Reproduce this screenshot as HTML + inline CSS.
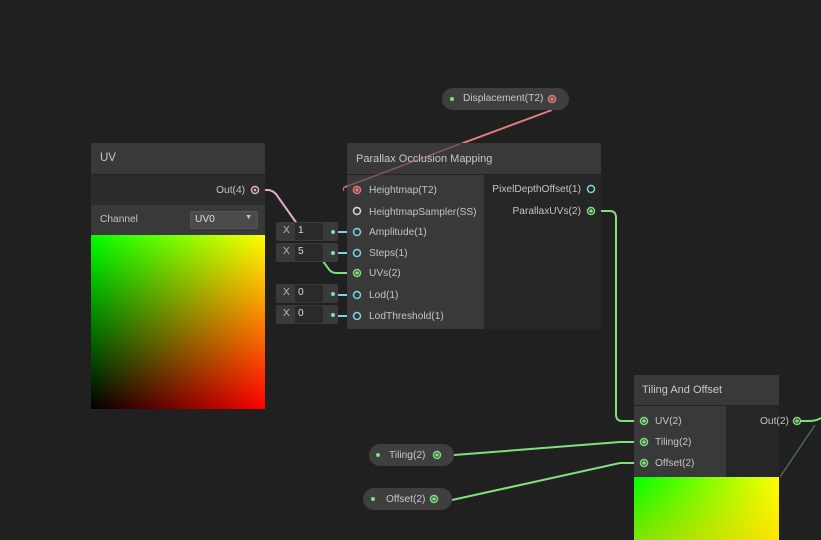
<!DOCTYPE html><html><head><style>
*{margin:0;padding:0;box-sizing:border-box}
body{width:821px;height:540px;background:#202020;position:relative;overflow:hidden;font-family:"Liberation Sans",sans-serif;font-size:10.2px;color:#c4c4c4}
.a{position:absolute}
.hdr{background:#393939;color:#c8c8c8;font-size:11.5px;padding-left:9px;border-bottom:1px solid #232323}
.t{position:absolute;white-space:nowrap}
.pill{position:absolute;background:#3f3f3f;border-radius:11px;color:#c8c8c8}
.fld{position:absolute;background:#3a3a3a;width:62px;height:19px;border-radius:2px}
.fld span{position:absolute;left:7px;top:3px;color:#bbb}
.fld i{position:absolute;left:19px;top:1px;width:28px;height:17px;background:#2a2a2a;border-radius:2px;font-style:normal;padding:2px 3px;color:#ddd}
.fld b{position:absolute;left:55px;top:8px;width:4px;height:4px;border-radius:50%;background:#7ad6e0}
</style></head><body>
<svg class="a" style="left:0;top:0" width="821" height="540">
<g fill="none" stroke-width="2">
<path d="M552 110 L345 187" stroke="#e87b7b"/>
<path d="M262 190 L268 190 Q272 190 276 194 L300 228" stroke="#e8a8d0"/>
<path d="M312 246 L328 268 Q331 273 336 273 L357 273" stroke="#7ee07e"/>
<path d="M338 232 L357 232 M338 253 L357 253 M338 295 L357 295 M338 316 L357 316" stroke="#7ad6e0"/>
<path d="M596 211 L610 211 Q616 211 616 218 L616 414 Q616 421 622 421 L644 421" stroke="#7ee07e"/>
<path d="M454 455 L620 442 L644 442" stroke="#7ee07e"/>
<path d="M452 500 L620 463 L644 463" stroke="#7ee07e"/>
<path d="M800 421 L810 421 Q816 421 821 418" stroke="#7ee07e"/>
</g></svg>

<!-- UV node -->
<div class="a" style="left:91px;top:143px;width:174px;height:266px;background:#2e2e2e">
<div class="hdr" style="height:32px;line-height:31px">UV</div>
<div class="a" style="top:32px;left:0;width:174px;height:30px;background:#2c2c2c"></div>
<div class="t" style="right:20px;top:42px">Out(4)</div>
<div class="a" style="top:62px;left:0;width:174px;height:30px;background:#393939"></div>
<div class="t" style="left:9px;top:71px">Channel</div>
<div class="a" style="left:99px;top:68px;width:68px;height:18px;background:#4a4a4a;border-radius:2px;border:1px solid #555"><span class="t" style="left:4px;top:2px;color:#ddd">UV0</span><span class="t" style="right:5px;top:2px;font-size:7px;color:#ccc">▼</span></div>
</div>
<svg class="a" style="left:91px;top:235px" width="174" height="174"><defs>
<linearGradient id="gx" x1="0" x2="1" y1="0" y2="0"><stop offset="0" stop-color="#000"/><stop offset="1" stop-color="#f00"/></linearGradient>
<linearGradient id="gy" x1="0" x2="0" y1="0" y2="1"><stop offset="0" stop-color="#0f0"/><stop offset="1" stop-color="#000"/></linearGradient></defs>
<rect width="174" height="174" fill="url(#gx)"/><rect width="174" height="174" fill="url(#gy)" style="mix-blend-mode:screen"/></svg>

<!-- fields -->
<div class="fld" style="left:276px;top:222px"><span>X</span><i>1</i><b></b></div>
<div class="fld" style="left:276px;top:243px"><span>X</span><i>5</i><b></b></div>
<div class="fld" style="left:276px;top:284px"><span>X</span><i>0</i><b></b></div>
<div class="fld" style="left:276px;top:305px"><span>X</span><i>0</i><b></b></div>

<!-- POM node -->
<div class="a" style="left:347px;top:143px;width:254px;height:186px;background:#262626">
<div class="hdr" style="height:32px;line-height:32px;font-size:11px">Parallax Occlusion Mapping</div>
<div class="a" style="left:0;top:32px;width:137px;height:154px;background:#393939"></div>
</div>
<div class="t" style="left:369px;top:185px">Heightmap(T2)</div>
<div class="t" style="left:369px;top:207px">HeightmapSampler(SS)</div>
<div class="t" style="left:369px;top:227px">Amplitude(1)</div>
<div class="t" style="left:369px;top:248px">Steps(1)</div>
<div class="t" style="left:369px;top:268px">UVs(2)</div>
<div class="t" style="left:369px;top:290px">Lod(1)</div>
<div class="t" style="left:369px;top:311px">LodThreshold(1)</div>
<div class="t" style="right:240px;top:184px">PixelDepthOffset(1)</div>
<div class="t" style="right:240px;top:206px">ParallaxUVs(2)</div>

<!-- Displacement pill -->
<div class="pill" style="left:442px;top:88px;width:127px;height:22px"><span class="a" style="left:8px;top:9px;width:4px;height:4px;border-radius:50%;background:#7ee07e"></span><span class="t" style="left:21px;top:5px">Displacement(T2)</span></div>

<!-- Tiling/Offset pills -->
<div class="pill" style="left:369px;top:444px;width:85px;height:22px"><span class="a" style="left:7px;top:9px;width:4px;height:4px;border-radius:50%;background:#7ee07e"></span><span class="t" style="left:20px;top:6px">Tiling(2)</span></div>
<div class="pill" style="left:363px;top:488px;width:89px;height:22px"><span class="a" style="left:8px;top:9px;width:4px;height:4px;border-radius:50%;background:#7ee07e"></span><span class="t" style="left:23px;top:6px">Offset(2)</span></div>

<!-- Tiling And Offset node -->
<div class="a" style="left:634px;top:375px;width:145px;height:165px;background:#262626">
<div class="hdr" style="height:31px;line-height:31px;font-size:11px;padding-left:8px">Tiling And Offset</div>
<div class="a" style="left:0;top:31px;width:92px;height:71px;background:#393939"></div>
<div class="a" style="left:0;top:102px;width:145px;height:63px;background:linear-gradient(to right,#00ff00,#ffff00)"></div>
<div class="a" style="left:0;top:102px;width:145px;height:63px;background:linear-gradient(to bottom,rgba(255,200,0,0),rgba(255,200,0,.5))"></div>
</div>
<div class="t" style="left:655px;top:416px">UV(2)</div>
<div class="t" style="left:655px;top:437px">Tiling(2)</div>
<div class="t" style="left:655px;top:458px">Offset(2)</div>
<div class="t" style="left:760px;top:416px">Out(2)</div>

<!-- overlay wires & ports -->
<svg class="a" style="left:0;top:0" width="821" height="540">
<path d="M460 144 L345 187" stroke="#e87b7b" stroke-width="1.5" fill="none" opacity=".45"/>
<path d="M345 187 Q342 188 344 191" stroke="#e87b7b" fill="none"/>
<path d="M815 425 L780 477" stroke="#4d6a4d" stroke-width="1.5" fill="none"/>
<g stroke-width="1.5">
<g fill="#2e2e2e" stroke="#e8a8d0"><circle cx="255" cy="190" r="3.5"/></g><circle cx="255" cy="190" r="1.3" fill="#e8a8d0"/>
<g fill="#393939">
<circle cx="357" cy="190" r="3.5" stroke="#e87b7b"/>
<circle cx="357" cy="211" r="3.5" stroke="#ddd"/>
<circle cx="357" cy="232" r="3.5" stroke="#7ad6e0"/>
<circle cx="357" cy="253" r="3.5" stroke="#7ad6e0"/>
<circle cx="357" cy="273" r="3.5" stroke="#7ee07e"/>
<circle cx="357" cy="295" r="3.5" stroke="#7ad6e0"/>
<circle cx="357" cy="316" r="3.5" stroke="#7ad6e0"/>
<circle cx="644" cy="421" r="3.5" stroke="#7ee07e"/>
<circle cx="644" cy="442" r="3.5" stroke="#7ee07e"/>
<circle cx="644" cy="463" r="3.5" stroke="#7ee07e"/>
</g>
<g fill="#262626">
<circle cx="591" cy="189" r="3.5" stroke="#7ad6e0"/>
<circle cx="591" cy="211" r="3.5" stroke="#7ee07e"/>
<circle cx="797" cy="421" r="3.5" stroke="#7ee07e"/>
</g>
<g fill="#3f3f3f">
<circle cx="552" cy="99" r="3.5" stroke="#e87b7b"/>
<circle cx="437" cy="455" r="3.5" stroke="#7ee07e"/>
<circle cx="434" cy="499" r="3.5" stroke="#7ee07e"/>
</g>
</g>
<g fill="#e87b7b"><circle cx="357" cy="190" r="1.8"/><circle cx="552" cy="99" r="1.8"/></g>
<g fill="#7ee07e"><circle cx="357" cy="273" r="1.8"/><circle cx="591" cy="211" r="1.8"/><circle cx="644" cy="421" r="1.8"/><circle cx="644" cy="442" r="1.8"/><circle cx="644" cy="463" r="1.8"/><circle cx="797" cy="421" r="1.8"/><circle cx="437" cy="455" r="1.8"/><circle cx="434" cy="499" r="1.8"/></g>
</svg>
</body></html>
